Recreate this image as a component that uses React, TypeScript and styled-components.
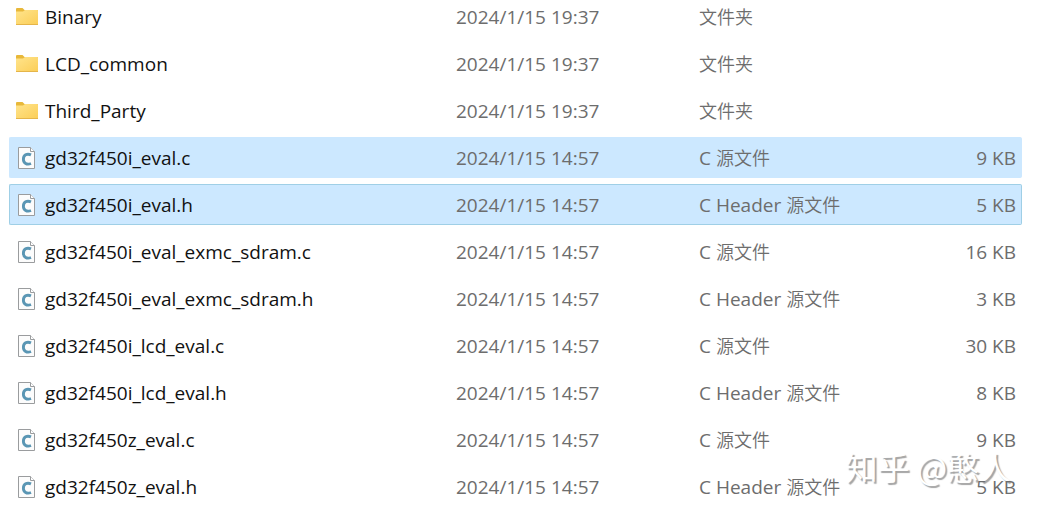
import React from "react";
import styled, { createGlobalStyle } from "styled-components";

const GlobalStyle = createGlobalStyle`
  * { box-sizing: border-box; }
  body {
    margin: 0;
    background: #fff;
    font-family: "Open Sans", "Noto Sans CJK SC", sans-serif;
    font-size: 19px;
    line-height: 24px;
  }
`;

type Selection = "none" | "selected" | "focused";

const Pane = styled.main`
  position: relative;
  isolation: isolate;
  display: flow-root;
  overflow: hidden;
  padding: 0 17px 0 9px;
`;

/* The list is scrolled slightly, so the first row is cut by the top edge. */
const FileTable = styled.table`
  width: 100%;
  margin-top: -10px;
  table-layout: fixed;
  border-collapse: separate;
  border-spacing: 0 6px;
`;

const NameCol = styled.col`
  width: 447px;
`;

const DateCol = styled.col`
  width: 243px;
`;

const TypeCol = styled.col``;

const SizeCol = styled.col`
  width: 100px;
`;

const edge = { none: "transparent", selected: "#cce8ff", focused: "#9fcfe6" };

const Cell = styled.td`
  height: 41px;
  padding: 0 1px 0 0;
  white-space: nowrap;
  vertical-align: middle;
  color: #6d6d6d;
`;

const NameCell = styled(Cell)`
  padding-left: 5px;
  color: #111;
`;

const SizeCell = styled(Cell)`
  padding-right: 5px;
  text-align: right;
`;

const Row = styled.tr<{ $state: Selection }>`
  ${Cell} {
    background: ${(p) => (p.$state === "none" ? "transparent" : "#cce8ff")};
    border: 0 solid ${(p) => edge[p.$state]};
    border-width: 1px 0;
  }
  ${Cell}:first-child {
    border-left-width: 1px;
    border-radius: 2px 0 0 2px;
  }
  ${Cell}:last-child {
    border-right-width: 1px;
    border-radius: 0 2px 2px 0;
  }
`;

const FileName = styled.div`
  display: flex;
  align-items: center;
  gap: 6px;
`;

const Icon = styled.svg`
  flex: none;
  width: 24px;
  height: 24px;
`;

const Chinese = styled.span`
  font-size: 18px;
  font-weight: 350;
`;

/* Sits beneath the file list so the sizes stay readable. */
const Watermark = styled.div`
  position: absolute;
  z-index: -1;
  right: 28px;
  bottom: 27px;
  font-family: "Noto Sans CJK SC", sans-serif;
  font-size: 32px;
  line-height: 40px;
  color: #fff;
  text-shadow: 2px 2px 1px #a4a4a4;
  pointer-events: none;
`;

function FolderIcon() {
  return (
    <Icon viewBox="0 0 24 24" aria-hidden="true">
      <defs>
        <linearGradient id="folder" x1="0" y1="0" x2="1" y2="1">
          <stop offset="0" stopColor="#ffe48c" />
          <stop offset="1" stopColor="#fbce58" />
        </linearGradient>
      </defs>
      <path d="M1 4q0-1 1-1h5.500l2 2H22q1 0 1 1v5H1z" fill="#e8b83a" />
      <path d="M1 6.500h7l2-1.500H22q1 0 1 1v13.500H1z" fill="url(#folder)" />
      <path d="M1 19.500h22" stroke="#e5b54a" strokeWidth="1" />
    </Icon>
  );
}

function SourceIcon() {
  return (
    <Icon viewBox="0 0 24 24" aria-hidden="true">
      <path d="M3.500 1.500H15.500L19.500 5.500V22.500H3.500z" fill="#fcfcfc" stroke="#9a9c9e" />
      <path d="M15.500 1.500V5.500H19.500" fill="#fff" stroke="#9a9c9e" />
      <path
        d="M16 8.900C11.800 7 8.400 9.200 8.400 13.200S11.800 19.200 16 17.500"
        fill="none"
        stroke="#5a96b4"
        strokeWidth="2.900"
      />
    </Icon>
  );
}

interface FileEntry {
  name: string;
  date: string;
  type: "folder" | "c" | "h";
  size?: string;
  state?: Selection;
}

const typeLabels = {
  folder: { latin: "", chinese: "文件夹" },
  c: { latin: "C ", chinese: "源文件" },
  h: { latin: "C Header ", chinese: "源文件" },
};

const files: FileEntry[] = [
  { name: "Binary", date: "2024/1/15 19:37", type: "folder" },
  { name: "LCD_common", date: "2024/1/15 19:37", type: "folder" },
  { name: "Third_Party", date: "2024/1/15 19:37", type: "folder" },
  { name: "gd32f450i_eval.c", date: "2024/1/15 14:57", type: "c", size: "9 KB", state: "selected" },
  { name: "gd32f450i_eval.h", date: "2024/1/15 14:57", type: "h", size: "5 KB", state: "focused" },
  { name: "gd32f450i_eval_exmc_sdram.c", date: "2024/1/15 14:57", type: "c", size: "16 KB" },
  { name: "gd32f450i_eval_exmc_sdram.h", date: "2024/1/15 14:57", type: "h", size: "3 KB" },
  { name: "gd32f450i_lcd_eval.c", date: "2024/1/15 14:57", type: "c", size: "30 KB" },
  { name: "gd32f450i_lcd_eval.h", date: "2024/1/15 14:57", type: "h", size: "8 KB" },
  { name: "gd32f450z_eval.c", date: "2024/1/15 14:57", type: "c", size: "9 KB" },
  { name: "gd32f450z_eval.h", date: "2024/1/15 14:57", type: "h", size: "5 KB" },
];

export default function App() {
  return (
    <>
      <GlobalStyle />
      <Pane lang="zh-CN">
        <FileTable>
          <colgroup>
            <NameCol />
            <DateCol />
            <TypeCol />
            <SizeCol />
          </colgroup>
          <tbody>
            {files.map((file) => (
              <Row key={file.name} $state={file.state ?? "none"}>
                <NameCell>
                  <FileName>
                    {file.type === "folder" ? <FolderIcon /> : <SourceIcon />}
                    {file.name}
                  </FileName>
                </NameCell>
                <Cell>{file.date}</Cell>
                <Cell>
                  {typeLabels[file.type].latin}
                  <Chinese>{typeLabels[file.type].chinese}</Chinese>
                </Cell>
                <SizeCell>{file.size}</SizeCell>
              </Row>
            ))}
          </tbody>
        </FileTable>
        <Watermark>知乎 @憨人</Watermark>
      </Pane>
    </>
  );
}
